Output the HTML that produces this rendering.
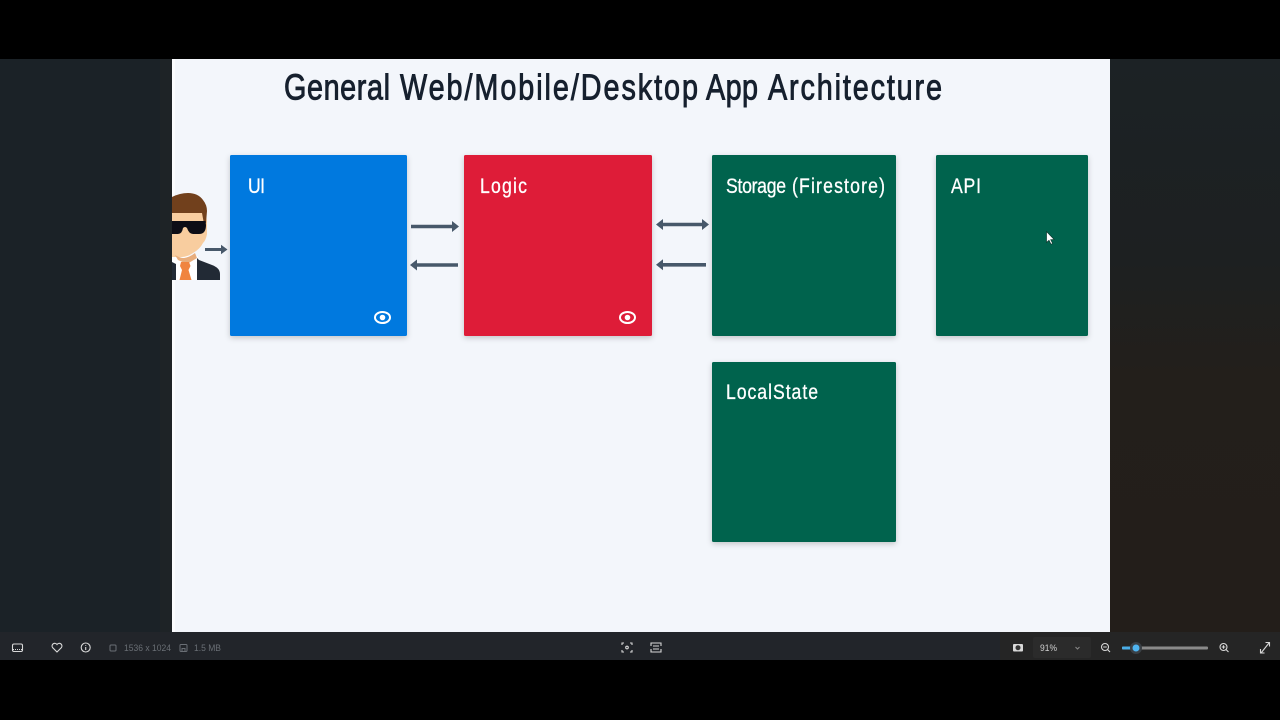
<!DOCTYPE html>
<html><head><meta charset="utf-8"><style>
html,body{margin:0;padding:0;background:#000;width:1280px;height:720px;overflow:hidden}
svg{display:block}
text{font-family:"Liberation Sans",sans-serif}
</style></head><body>
<svg width="1280" height="720" viewBox="0 0 1280 720" xmlns="http://www.w3.org/2000/svg">
<defs>
<linearGradient id="r" x1="0" y1="0" x2="0" y2="1"><stop offset="0" stop-color="#1c2225"/><stop offset=".35" stop-color="#1d2021"/><stop offset=".55" stop-color="#231f1b"/><stop offset="1" stop-color="#231e1a"/></linearGradient>
<filter id="s" x="-10%" y="-10%" width="120%" height="120%"><feDropShadow dx="0" dy="2" stdDeviation="3" flood-color="#000" flood-opacity=".2"/></filter>
<filter id="b" x="-5%" y="-5%" width="110%" height="110%"><feGaussianBlur stdDeviation=".35"/></filter>
</defs>
<rect width="1280" height="720" fill="#000"/>
<rect x="0" y="59" width="172" height="573" fill="#1b2227"/>
<rect x="160" y="59" width="12" height="573" fill="#1e2326"/>
<rect x="1110" y="59" width="170" height="573" fill="url(#r)"/>
<rect x="172" y="59" width="938" height="573" fill="#f3f6fb"/>
<rect x="172" y="59" width="3" height="573" fill="#fbfcfe"/>
<rect x="0" y="632" width="1000" height="28" fill="#22252a"/>
<rect x="1000" y="632" width="280" height="28" fill="#252525"/>

<g font-size="36" fill="#16202e" stroke="#16202e" stroke-width=".9">
<text transform="translate(284 99.500) scale(.8 1)" textLength="132.500" lengthAdjust="spacing">General</text>
<text transform="translate(400 99.500) scale(.8 1)" textLength="372.500" lengthAdjust="spacing">Web/Mobile/Desktop</text>
<text transform="translate(706 99.500) scale(.8 1)" textLength="65" lengthAdjust="spacing">App</text>
<text transform="translate(768 99.500) scale(.8 1)" textLength="217.500" lengthAdjust="spacing">Architecture</text>
</g>

<g filter="url(#s)">
<rect x="230" y="155" width="177" height="181" rx="1.500" fill="#0079df"/>
<rect x="464" y="155" width="188" height="181" rx="1.500" fill="#de1f38"/>
<rect x="712" y="155" width="184" height="181" rx="1.500" fill="#05634e"/>
<rect x="936" y="155" width="152" height="181" rx="1.500" fill="#05634e"/>
<rect x="712" y="362" width="184" height="180" rx="1.500" fill="#05634e"/>
</g>

<g font-size="21.500" fill="#fff" stroke="#fff" stroke-width=".3">
<text transform="translate(248 193) scale(.82 1)" textLength="20.700" lengthAdjust="spacing">UI</text>
<text transform="translate(480 193) scale(.82 1)" textLength="57.300" lengthAdjust="spacing">Logic</text>
<text transform="translate(726 193) scale(.82 1)" textLength="73.200" lengthAdjust="spacing">Storage</text>
<text transform="translate(792 193) scale(.82 1)" textLength="113.400" lengthAdjust="spacing">(Firestore)</text>
<text transform="translate(951 193) scale(.82 1)" textLength="36.600" lengthAdjust="spacing">API</text>
<text transform="translate(726 399) scale(.82 1)" textLength="112.200" lengthAdjust="spacing">LocalState</text>
</g>

<g fill="none" stroke="#fff" stroke-width="2">
<ellipse cx="382.500" cy="317.500" rx="7.500" ry="5.500"/>
<ellipse cx="627.500" cy="317.500" rx="7.500" ry="5.500"/>
</g>
<circle cx="382.500" cy="317.500" r="2.800" fill="#fff"/>
<circle cx="627.500" cy="317.500" r="2.800" fill="#fff"/>

<g fill="#47586a">
<path d="M411 224.700h41v-3.700l7 5.500-7 5.500v-3.700h-41z"/>
<path d="M458 263.200h-41v-3.700l-7 5.500 7 5.500v-3.700h41z"/>
<path d="M663 222.700h39v-3.700l7 5.500-7 5.500v-3.700h-39v3.700l-7-5.500 7-5.500z"/>
<path d="M706 263h-43v-3.700l-7 5.500 7 5.500v-3.700h43z"/>
<path d="M205 248h16v-3.200l6.500 4.700-6.500 4.700v-3.200h-16z"/>
</g>

<g filter="url(#b)">
<path d="M172 280v-24h26v24z" fill="#fff"/>
<path d="M197 280v-22l2 2 13 5q8 3 8 9v6z" fill="#232a35"/>
<path d="M172 262l4 2v16h-4z" fill="#232a35"/>
<path d="M172 206h33l2 16v12q-1 6-4 9-3 6-10 10-6 4-11 4h-10z" fill="#f8cd9f"/>
<path d="M175 255q5 3 9 3 6-1 11-5l2 5-10 6-9-4z" fill="#e8ad7c"/>
<path d="M181 262h8l1.500 4-2 4 3 10h-12l2.500-10-2-4z" fill="#f08440"/>
<path d="M172 197q8-4 16-4 10 0 15 7 4 5 4 11l-1 12-2 1-2-11h-30z" fill="#713f1c"/>
<path d="M172 221h33.500l.5 4q0 9-7 9h-6q-4 0-6-6-2-2-4 0-1 6-5 6h-6z" fill="#101114"/>
</g>

<path d="M1046.500 231.500v11l2.500-2.200 2 4 1.700-.8-2-3.800 3.500-.2z" fill="#fff" stroke="#0e3a30" stroke-width=".7"/>

<g fill="none" stroke="#d8d8d8" stroke-width="1.100">
<rect x="12.500" y="644" width="10" height="7.500" rx="1.500"/>
<path d="M13 649.500h9" stroke-dasharray="1 1"/>
<path d="M57 652l-4.500-4.500a2.600 2.600 0 0 1 4.500-3 2.600 2.600 0 0 1 4.500 3z"/>
<circle cx="85.700" cy="647.500" r="4.500"/>
<path d="M85.700 645v.8M85.700 647v3"/>
<path d="M622 645v-2h2M630 643h2v2M632 650v2h-2M624 652h-2v-2"/>
<circle cx="627" cy="647.500" r="1.300"/>
<path d="M651 646v-3h10v3M651 649v3h10v-3M653 646h6M653 649h6"/>
<rect x="1013" y="644" width="10" height="7.500" rx="1" fill="#d8d8d8" stroke="none"/>
<circle cx="1105" cy="647" r="3.500"/>
<path d="M1107.500 649.500l2.500 2.500M1103.200 647h3.600"/>
<circle cx="1223.500" cy="647" r="3.500"/>
<path d="M1226 649.500l2.500 2.500M1221.700 647h3.600M1223.500 645.200v3.600"/>
<path d="M1261 653l8-10M1265.500 642.500h4v4M1260.500 649v4h4"/>
</g>
<circle cx="1018" cy="647.700" r="2.500" fill="#333"/>
<g fill="none" stroke="#6a6f75" stroke-width="1">
<rect x="110" y="645" width="6" height="6" rx="1"/>
<rect x="180" y="644.500" width="7" height="7" rx="1"/>
<path d="M182 651v-2.500h3v2.500"/>
</g>
<g font-size="9" fill="#6a6f75">
<text x="124" y="651" textLength="47" lengthAdjust="spacingAndGlyphs">1536 x 1024</text>
<text x="194" y="651" textLength="27" lengthAdjust="spacingAndGlyphs">1.5 MB</text>
</g>
<rect x="1033" y="637" width="58" height="21" rx="2" fill="#2b2b2b"/>
<text x="1040" y="651" font-size="9.500" fill="#cfcfcf" textLength="17" lengthAdjust="spacingAndGlyphs">91%</text>
<path d="M1075.500 647l2 2 2-2" fill="none" stroke="#888"/>
<rect x="1122" y="646.500" width="86" height="3" rx="1" fill="#8a8a8a"/>
<rect x="1122" y="646.500" width="12" height="3" rx="1" fill="#4aaee8"/>
<circle cx="1136" cy="648" r="6" fill="#3a4046"/>
<circle cx="1136" cy="648" r="3.500" fill="#4fb4f0"/>
</svg>
</body></html>
